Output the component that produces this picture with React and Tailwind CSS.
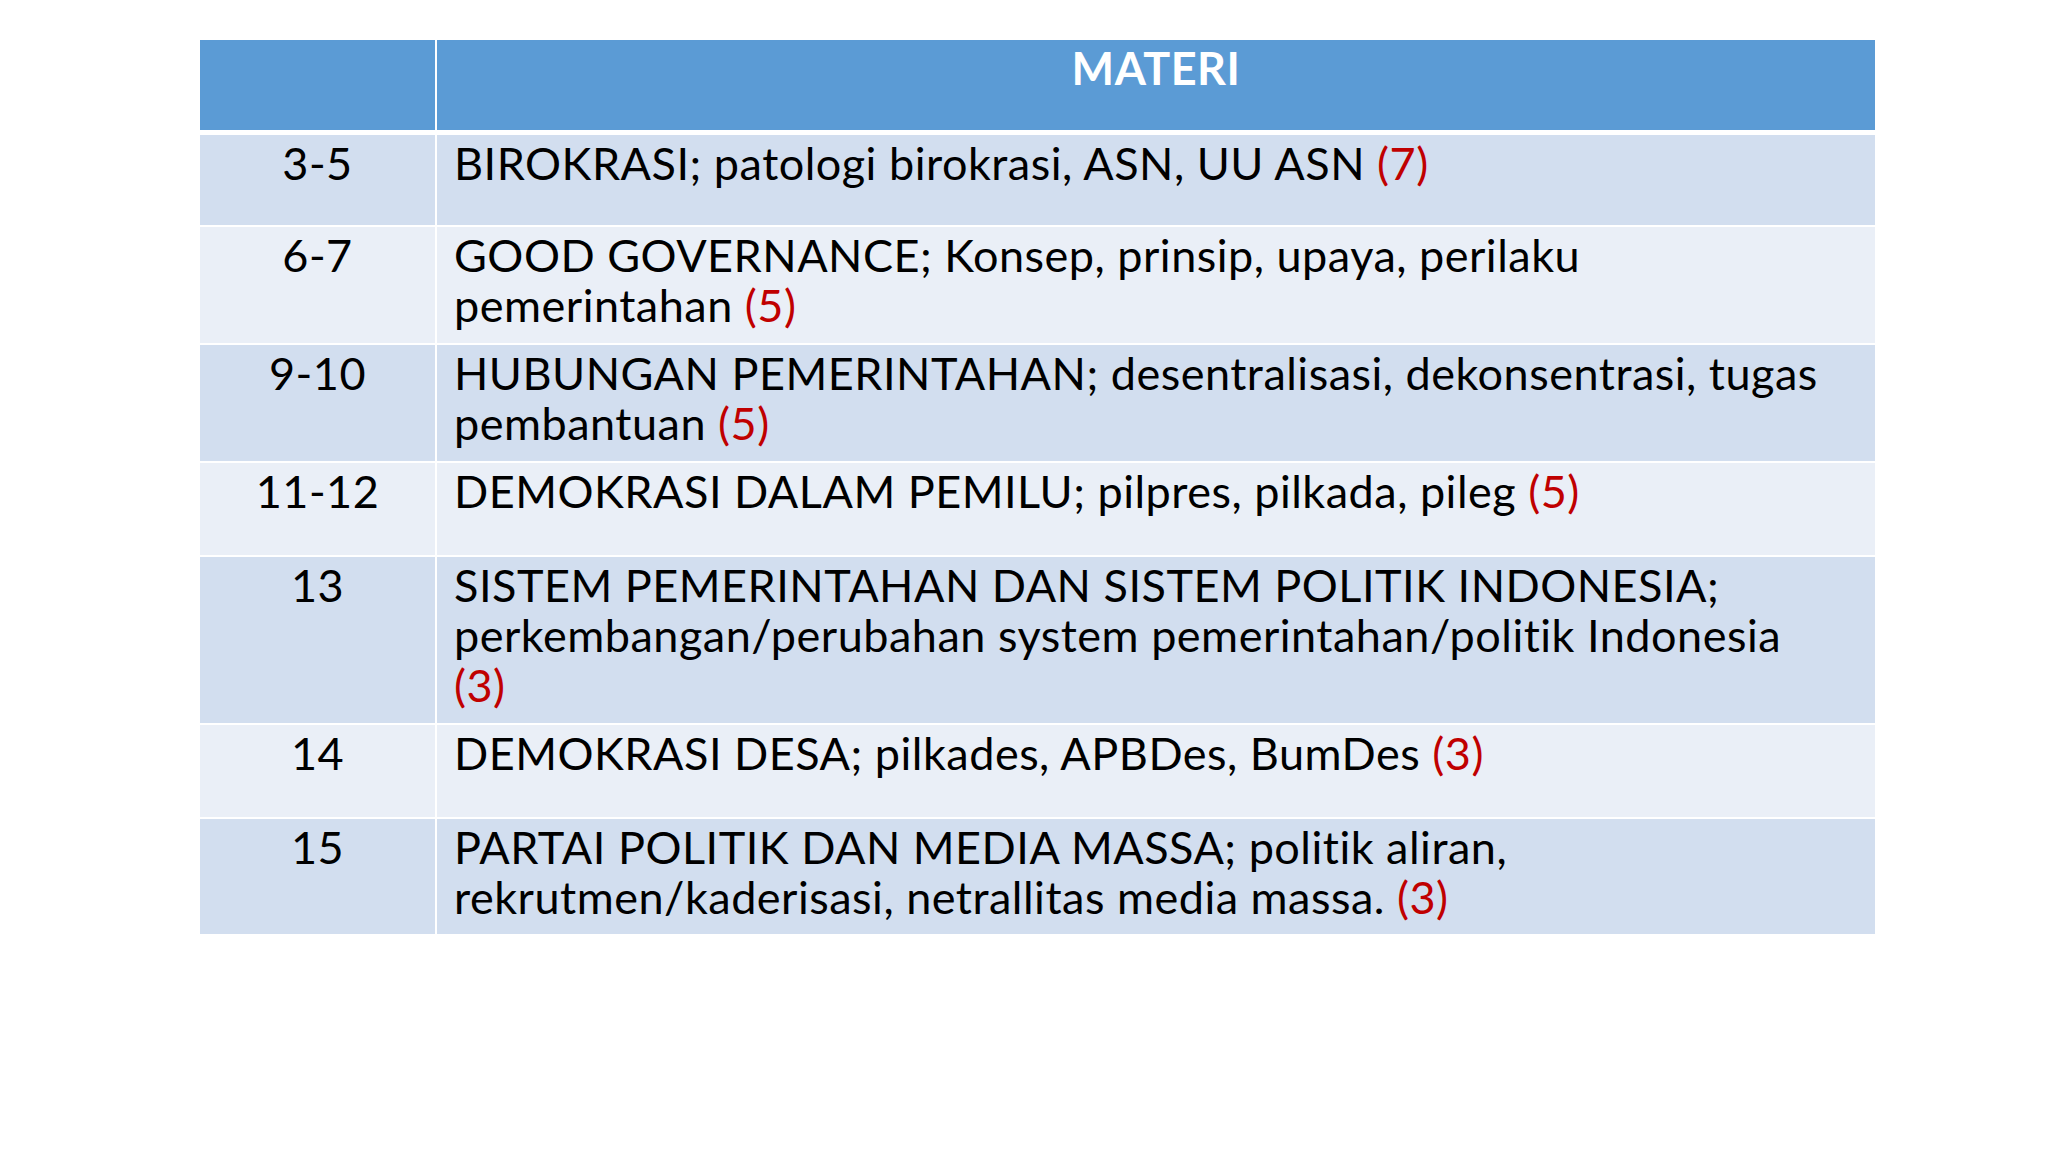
import React from "react";

const rows = [
  { no: "3-5", lines: [["BIROKRASI; patologi birokrasi, ASN, UU ASN ", "(7)"]], h: "h-[90px]", bg: "bg-[#d2deef]" },
  {
    no: "6-7",
    lines: [["GOOD GOVERNANCE; Konsep, prinsip, upaya, perilaku"], ["pemerintahan ", "(5)"]],
    h: "h-[116px]",
    bg: "bg-[#eaeff7]",
  },
  {
    no: "9-10",
    lines: [["HUBUNGAN PEMERINTAHAN; desentralisasi, dekonsentrasi, tugas"], ["pembantuan ", "(5)"]],
    h: "h-[116px]",
    bg: "bg-[#d2deef]",
  },
  { no: "11-12", lines: [["DEMOKRASI DALAM PEMILU; pilpres, pilkada, pileg ", "(5)"]], h: "h-[92px]", bg: "bg-[#eaeff7]" },
  {
    no: "13",
    lines: [
      ["SISTEM PEMERINTAHAN DAN SISTEM POLITIK INDONESIA;"],
      ["perkembangan/perubahan system pemerintahan/politik Indonesia"],
      ["", "(3)"],
    ],
    h: "h-[166px]",
    bg: "bg-[#d2deef]",
  },
  { no: "14", lines: [["DEMOKRASI DESA; pilkades, APBDes, BumDes ", "(3)"]], h: "h-[92px]", bg: "bg-[#eaeff7]" },
  {
    no: "15",
    lines: [["PARTAI POLITIK DAN MEDIA MASSA; politik aliran,"], ["rekrutmen/kaderisasi, netrallitas media massa. ", "(3)"]],
    h: "h-[115px]",
    bg: "bg-[#d2deef]",
  },
];

export default function App() {
  return (
    <div className="w-[2048px] h-[1152px] bg-white font-['Lato','Carlito','Liberation_Sans',sans-serif] text-[45px] leading-[50px] tracking-[0.5px] text-black">
      <div className="ml-[200px] pt-[40px] w-[1675px] flex flex-col">
        {/* header */}
        <div className="flex h-[90px] gap-[2px] mb-[5px]">
          <div className="w-[235px] bg-[#5b9bd5]" />
          <div className="flex-1 bg-[#5b9bd5] text-center text-white font-bold pt-[3px]">MATERI</div>
        </div>

        {/* body */}
        <div className="flex flex-col gap-[2px]">
          {rows.map((r) => (
            <div key={r.no} className={`flex gap-[2px] ${r.h}`}>
              <div className={`w-[235px] ${r.bg} text-center pt-[3px]`}>{r.no}</div>
              <div className={`flex-1 ${r.bg} pl-[17px] pt-[3px]`}>
                {r.lines.map((l, i) => (
                  <div key={i} className="whitespace-nowrap">
                    {l[0]}
                    {l[1] && <span className="text-[#c00000]">{l[1]}</span>}
                  </div>
                ))}
              </div>
            </div>
          ))}
        </div>
      </div>
    </div>
  );
}
